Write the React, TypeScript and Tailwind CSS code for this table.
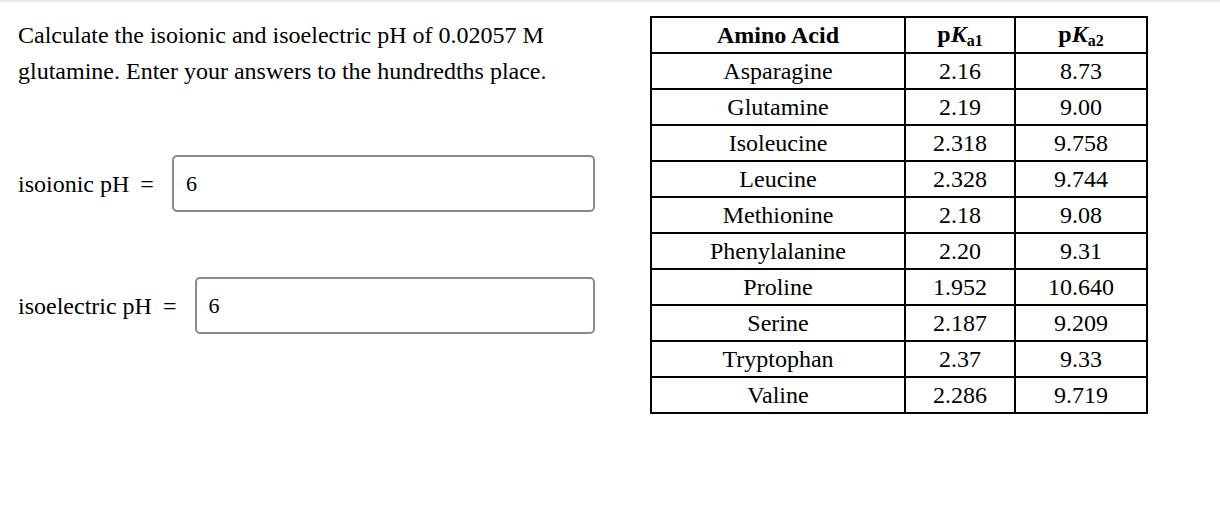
const rows: [string, string, string][] = [
  ['Asparagine', '2.16', '8.73'],
  ['Glutamine', '2.19', '9.00'],
  ['Isoleucine', '2.318', '9.758'],
  ['Leucine', '2.328', '9.744'],
  ['Methionine', '2.18', '9.08'],
  ['Phenylalanine', '2.20', '9.31'],
  ['Proline', '1.952', '10.640'],
  ['Serine', '2.187', '9.209'],
  ['Tryptophan', '2.37', '9.33'],
  ['Valine', '2.286', '9.719'],
];

function Answer({ label, value }: { label: string; value: string }) {
  return (
    <div className="flex items-center">
      <span className="whitespace-nowrap">{label}</span>
      <span className="ml-[11px] mr-[18px]">=</span>
      <input
        type="text"
        defaultValue={value}
        className="flex-1 h-[57px] border-2 border-[#8a8a8a] rounded-[5px] px-[12px] text-[22px] outline-none text-black"
        style={{ fontFamily: '"Liberation Serif", "Times New Roman", serif' }}
      />
    </div>
  );
}

function PK({ n }: { n: string }) {
  return (
    <span>
      p<i>K</i>
      <span className="text-[16px] relative top-[4px]">a{n}</span>
    </span>
  );
}

export default function App() {
  return (
    <div
      className="w-[1220px] h-[518px] bg-white text-black border-t-2 border-[#ebebeb] flex"
      style={{ fontFamily: '"Liberation Serif", "Times New Roman", serif' }}
    >
      {/* question + answers */}
      <div className="w-[595px] pl-[18px] pt-[15px] text-[24px]">
        <p className="leading-[36px]">
          Calculate the isoionic and isoelectric pH of 0.02057 M glutamine. Enter your answers to the hundredths place.
        </p>
        <div className="mt-[66px] flex flex-col gap-[65px]">
          <Answer label="isoionic pH" value="6" />
          <Answer label="isoelectric pH" value="6" />
        </div>
      </div>

      {/* pKa table */}
      <div className="ml-[55px] pt-[14px]">
        <table className="border-collapse border-2 border-black text-[24px] leading-[28px] text-center">
          <thead>
            <tr className="h-[36px]">
              <th className="w-[254px] border-2 border-black font-bold p-0">Amino Acid</th>
              <th className="w-[110px] border-2 border-black font-bold p-0"><PK n="1" /></th>
              <th className="w-[132px] border-2 border-black font-bold p-0"><PK n="2" /></th>
            </tr>
          </thead>
          <tbody>
            {rows.map(([name, a, b]) => (
              <tr key={name} className="h-[36px]">
                <td className="border-2 border-black p-0">{name}</td>
                <td className="border-2 border-black p-0">{a}</td>
                <td className="border-2 border-black p-0">{b}</td>
              </tr>
            ))}
          </tbody>
        </table>
      </div>
    </div>
  );
}
